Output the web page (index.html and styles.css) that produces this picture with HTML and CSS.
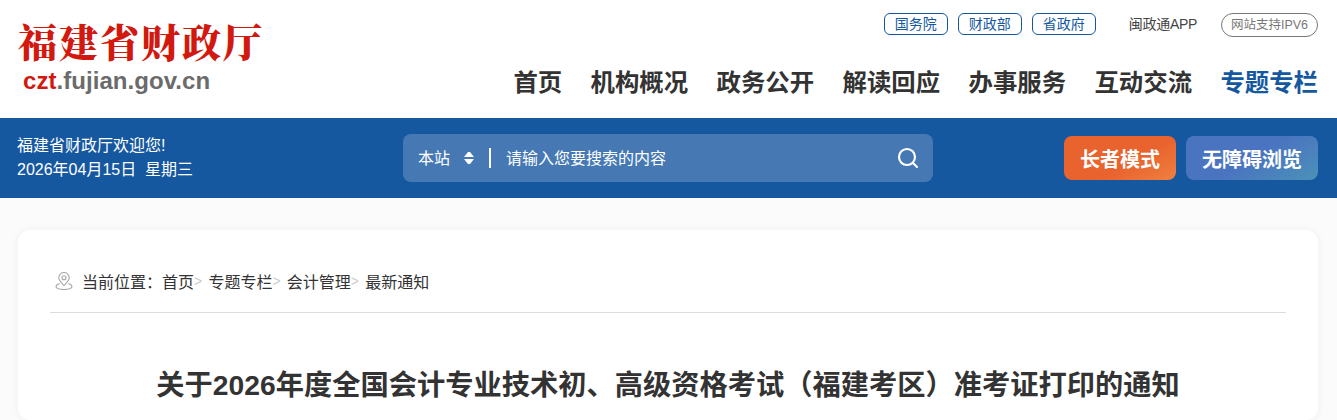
FILE: index.html
```html
<!DOCTYPE html>
<html lang="zh-CN">
<head>
    <meta charset="UTF-8">
    <meta name="viewport" content="width=device-width, initial-scale=1.0">
    <title>关于2026年度全国会计专业技术初、高级资格考试（福建考区）准考证打印的通知</title>
    <link rel="stylesheet" href="styles.css">
</head>
<body>
    <header class="header">
        <div class="logo">
            <div class="logo-name">福建省财政厅</div>
            <div class="logo-url"><span class="logo-url-red">czt</span>.fujian.gov.cn</div>
        </div>
        <div class="header-right">
            <div class="top-links">
                <a class="top-btn">国务院</a>
                <a class="top-btn">财政部</a>
                <a class="top-btn">省政府</a>
                <a class="top-app">闽政通APP</a>
                <span class="top-ipv6">网站支持IPV6</span>
            </div>
            <nav class="nav">
                <a>首页</a>
                <a>机构概况</a>
                <a>政务公开</a>
                <a>解读回应</a>
                <a>办事服务</a>
                <a>互动交流</a>
                <a class="nav-active">专题专栏</a>
            </nav>
        </div>
    </header>

    <section class="band">
        <div class="welcome">
            <div>福建省财政厅欢迎您!</div>
            <div>2026年04月15日&nbsp; 星期三</div>
        </div>
        <div class="search">
            <span class="search-scope">本站</span>
            <span class="search-arrows"><i class="arrow-up"></i><i class="arrow-down"></i></span>
            <span class="search-line"></span>
            <span class="search-text">请输入您要搜索的内容</span>
            <svg class="search-icon" width="22" height="22" viewBox="0 0 22 22" fill="none" stroke="#fff" stroke-width="2.2" stroke-linecap="round">
                <circle cx="10" cy="10" r="8"/>
                <path d="M16 16l4 4"/>
            </svg>
        </div>
        <div class="modes">
            <a class="mode-btn mode-elder">长者模式</a>
            <a class="mode-btn mode-access">无障碍浏览</a>
        </div>
    </section>

    <main class="page">
        <div class="card">
            <div class="crumbs">
                <svg class="crumbs-icon" width="18" height="18" viewBox="0 0 18 18" fill="none" stroke="#a8a8a8" stroke-width="1.100">
                    <path d="M9 13.6C6.400 10.800 3.800 8.400 3.800 5.700a5.200 5.200 0 0 1 10.400 0c0 2.700-2.600 5.100-5.200 7.900z"/>
                    <circle cx="9" cy="5.700" r="2"/>
                    <path d="M4.600 11.500C2.400 12.200 1 13.300 1 14.600 1 16.200 4.500 17.500 9 17.500s8-1.300 8-2.900c0-1.300-1.400-2.400-3.600-3.100"/>
                </svg>
                <span>当前位置：</span>
                <a>首页</a><span class="crumbs-sep">&gt;</span>
                <a>专题专栏</a><span class="crumbs-sep">&gt;</span>
                <a>会计管理</a><span class="crumbs-sep">&gt;</span>
                <a>最新通知</a>
            </div>
            <h1 class="title">关于2026年度全国会计专业技术初、高级资格考试（福建考区）准考证打印的通知</h1>
        </div>
    </main>
</body>
</html>
```

FILE: styles.css
```css
* {
    box-sizing: border-box;
}
html, body {
    height: 420px;
    overflow: hidden;
}
body {
    margin: 0;
    background-color: #fbfbfb;
    font-family: "Liberation Sans", "Noto Sans CJK SC", sans-serif;
    color: #333;
}
.header {
    height: 118px;
    padding: 0 19px 0 18px;
    background-color: #fff;
    display: flex;
    justify-content: space-between;
}
.logo {
    padding-top: 17px;
}
.logo-name {
    font-family: "Noto Serif CJK SC", "Noto Sans CJK SC", serif;
    font-size: 39px;
    line-height: 46px;
    font-weight: 900;
    letter-spacing: 2px;
    color: #d2190f;
}
.logo-url {
    margin: 4px 0 0 5px;
    font-size: 24px;
    line-height: 28px;
    font-weight: bold;
    letter-spacing: 0.05px;
    color: #6b6b6b;
}
.logo-url-red {
    color: #d2190f;
}
.header-right {
    display: flex;
    flex-direction: column;
    align-items: flex-end;
}
.top-links {
    margin-top: 13px;
    display: flex;
    align-items: flex-start;
}
.top-btn {
    width: 64px;
    height: 22px;
    margin-right: 10px;
    border: 1px solid #15589f;
    border-radius: 6px;
    font-size: 14px;
    line-height: 20px;
    text-align: center;
    color: #15589f;
}
.top-app {
    margin: 0 24px 0 23px;
    font-size: 14px;
    line-height: 22px;
    letter-spacing: -0.3px;
    color: #444;
}
.top-ipv6 {
    width: 97px;
    height: 24px;
    border: 1px solid #777;
    border-radius: 12px;
    font-size: 12.500px;
    line-height: 22px;
    text-align: center;
    color: #777;
}
.nav {
    margin-top: 30px;
    display: flex;
    gap: 28.400px;
}
.nav a {
    font-size: 24.400px;
    line-height: 32px;
    font-weight: bold;
    color: #333;
}
.nav a.nav-active {
    color: #15589f;
}
.band {
    height: 80px;
    padding: 0 19px 0 17px;
    background-color: #15589f;
    display: flex;
    align-items: center;
    color: #fff;
}
.welcome {
    width: 386px;
    font-size: 16px;
    line-height: 24px;
}
.search {
    width: 530px;
    height: 48px;
    padding: 0 14px 0 15px;
    background-color: #4679b3;
    border-radius: 8px;
    display: flex;
    align-items: center;
    font-size: 16px;
}
.search-scope {
    width: 46px;
    margin-bottom: 2px;
}
.search-arrows {
    width: 10px;
    display: flex;
    flex-direction: column;
    gap: 2px;
}
.arrow-up {
    border-left: 4px solid transparent;
    border-right: 4px solid transparent;
    border-bottom: 5px solid #fff;
}
.arrow-down {
    border-left: 4px solid transparent;
    border-right: 4px solid transparent;
    border-top: 5px solid #fff;
}
.search-line {
    width: 2px;
    height: 20px;
    margin: 0 15px;
    background-color: #fff;
}
.search-text {
    flex: 1;
    margin-bottom: 2px;
}
.modes {
    margin-left: auto;
    display: flex;
    gap: 10px;
}
.mode-btn {
    height: 44px;
    border-radius: 8px;
    font-size: 20px;
    line-height: 48px;
    font-weight: bold;
    text-align: center;
    color: #fff;
}
.mode-elder {
    width: 112px;
    background: linear-gradient(150deg, #e9632f 60%, #f08040);
}
.mode-access {
    width: 132px;
    background: linear-gradient(150deg, #4a74c0 50%, #4b92b8);
}
.page {
    padding: 32px 19px 0 18px;
}
.card {
    height: 190px;
    padding: 32px 32px 0;
    background-color: #fff;
    border-radius: 12px;
    box-shadow: 0 0 8px rgba(0,0,0,0.05);
}
.crumbs {
    height: 51px;
    padding: 0 0 12px 5px;
    border-bottom: 1px solid #ddd;
    display: flex;
    align-items: center;
    font-size: 16px;
    color: #333;
}
.crumbs-icon {
    margin-right: 9px;
}
.crumbs-sep {
    width: 14.400px;
    font-size: 14px;
    color: #ccc;
}
.title {
    margin: 52px 0 0;
    font-size: 28.250px;
    line-height: 40px;
    font-weight: bold;
    text-align: center;
    color: #333;
}
```
